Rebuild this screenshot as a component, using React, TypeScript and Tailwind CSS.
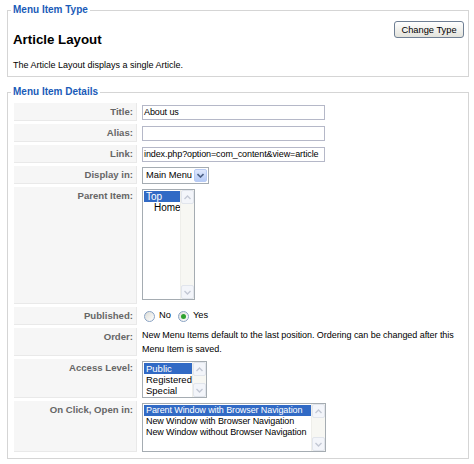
import React from "react";

const LABEL = "bg-[#f6f6f6] border-b border-r border-[#e9e9e9] text-right pr-[3px] pt-[2px] text-[9.6px] font-bold text-[#666]";

const ScrollBar = () => (
  <div className="w-[14px] shrink-0 flex flex-col justify-between bg-[#f7f7f3] border-l border-[#eeeeea]">
    <div className="h-[14px] rounded-[2px] border border-[#e1e5ec] bg-[#f3f5fa] flex items-center justify-center">
      <svg width="7" height="5" viewBox="0 0 7 5">
        <path d="M0.5 4 L3.5 1 L6.5 4" fill="none" stroke="#c3c8d4" strokeWidth="1.4" />
      </svg>
    </div>
    <div className="h-[14px] rounded-[2px] border border-[#e1e5ec] bg-[#f3f5fa] flex items-center justify-center">
      <svg width="7" height="5" viewBox="0 0 7 5">
        <path d="M0.5 1 L3.5 4 L6.5 1" fill="none" stroke="#c3c8d4" strokeWidth="1.4" />
      </svg>
    </div>
  </div>
);

const ListBox = ({ items, className, textClass, indent }: { items: string[]; className: string; textClass: string; indent?: boolean }) => (
  <div className={"flex border border-[#a5acb2] bg-white " + className}>
    <div className={"flex-1 min-w-0 overflow-hidden pt-[1px] pl-[1px] text-black " + textClass}>
      {items.map((item, i) => (
        <div
          key={i}
          className={
            i == 0
              ? "bg-[#316ac5] text-white pl-[2px] whitespace-nowrap"
              : (indent ? "pl-[10px]" : "pl-[2px]") + " whitespace-nowrap"
          }
        >
          {item}
        </div>
      ))}
    </div>
    <ScrollBar />
  </div>
);

const Radio = ({ checked }: { checked?: boolean }) => (
  <span className="w-[11px] h-[11px] rounded-full border border-[#8aa3c4] bg-gradient-to-br from-[#dcdcd6] to-white flex items-center justify-center">
    {checked && <span className="w-[5px] h-[5px] rounded-full bg-[#2ea22e]" />}
  </span>
);

const TextInput = ({ value }: { value?: string }) => (
  <div className="ml-[3px] mt-[2px] w-[183px] h-[15px] border border-[#b5b8c8] bg-white px-[1px] text-[9px] tracking-[-0.1px] leading-[13px] text-black whitespace-nowrap overflow-hidden">
    {value}
  </div>
);

export default function App() {
  return (
    <div className="w-[474px] h-[464px] bg-white pt-[4px] font-['Liberation_Sans',Arial,sans-serif] text-black">
      <fieldset className="ml-[7px] w-[462px] border border-[#d5d5d5] px-[5px] pb-[5px]">
        <legend className="-ml-[2px] px-[2px] text-[10px] leading-[12px] font-bold text-[#1a5bb8]">
          Menu Item Type
        </legend>
        <div className="flex justify-between">
          <div>
            <h2 className="mt-[15px] text-[13.3px] leading-[17px] font-bold">Article Layout</h2>
            <p className="mt-[11px] text-[9px] leading-[12px]">The Article Layout displays a single Article.</p>
          </div>
          <button className="mt-[5px] -mr-[1px] self-start w-[70px] h-[17px] rounded-[3px] border border-[#6f7f94] bg-gradient-to-b from-white to-[#e3e3dc] text-[9.3px] leading-[12px]">
            Change Type
          </button>
        </div>
      </fieldset>

      <fieldset className="mt-[9px] ml-[7px] w-[462px] border border-[#d5d5d5] pl-[6px] pr-[6px] pt-[5px] pb-[6px]">
        <legend className="-ml-[3px] px-[2px] text-[10px] leading-[12px] font-bold text-[#1a5bb8]">
          Menu Item Details
        </legend>
        <div className="grid grid-cols-[123px_1fr] gap-x-[2px] gap-y-[3px]">
          <div className={LABEL + " h-[18px]"}>Title:</div>
          <div><TextInput value="About us" /></div>

          <div className={LABEL + " h-[18px]"}>Alias:</div>
          <div><TextInput /></div>

          <div className={LABEL + " h-[18px]"}>Link:</div>
          <div><TextInput value="index.php?option=com_content&view=article" /></div>

          <div className={LABEL + " h-[18px]"}>Display in:</div>
          <div>
            <div className="ml-[3px] mt-[1px] w-[67px] h-[17px] flex border border-[#a5acb2] bg-white">
              <span className="flex-1 pl-[3px] text-[9.3px] leading-[15px] whitespace-nowrap">Main Menu</span>
              <span className="w-[13px] m-[1px] rounded-[2px] border border-[#b8cbf4] bg-gradient-to-b from-[#dfe8fd] to-[#b6cbf6] flex items-center justify-center">
                <svg width="7" height="5" viewBox="0 0 7 5">
                  <path d="M0.5 1 L3.5 4 L6.5 1" fill="none" stroke="#4d6185" strokeWidth="1.6" />
                </svg>
              </span>
            </div>
          </div>

          <div className={LABEL + " h-[117px]"}>Parent Item:</div>
          <div>
            <ListBox
              items={["Top", "Home"]}
              indent
              textClass="text-[10px] leading-[11px]"
              className="ml-[3px] mt-[2px] w-[53px] h-[111px]"
            />
          </div>

          <div className={LABEL + " h-[18px]"}>Published:</div>
          <div className="flex items-center gap-[3px] pl-[5px] text-[9.3px]">
            <Radio />
            <span className="ml-[1px] mr-[4px]">No</span>
            <Radio checked />
            <span className="ml-[1px]">Yes</span>
          </div>

          <div className={LABEL + " h-[28px]"}>Order:</div>
          <div className="h-[28px] pl-[3px] text-[9px] tracking-[-0.05px] leading-[14px]">
            New Menu Items default to the last position. Ordering can be changed after this Menu Item is saved.
          </div>

          <div className={LABEL + " h-[39px]"}>Access Level:</div>
          <div>
            <ListBox
              items={["Public", "Registered", "Special"]}
              textClass="text-[9.5px] leading-[11px]"
              className="ml-[3px] mt-[2px] w-[65px] h-[37px]"
            />
          </div>

          <div className={LABEL + " h-[51px]"}>On Click, Open in:</div>
          <div>
            <ListBox
              items={[
                "Parent Window with Browser Navigation",
                "New Window with Browser Navigation",
                "New Window without Browser Navigation",
              ]}
              textClass="text-[9px] leading-[11px] tracking-[-0.1px]"
              className="ml-[3px] mt-[2px] w-[184px] h-[49px]"
            />
          </div>
        </div>
      </fieldset>
    </div>
  );
}
